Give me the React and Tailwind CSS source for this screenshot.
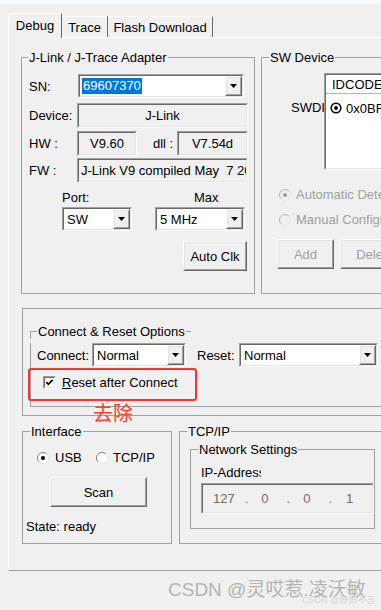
import React from 'react'

const F = "font-['Liberation_Sans',Arial,sans-serif]"
const CJK = "font-['Liberation_Sans','Noto_Sans_CJK_SC',sans-serif]"

// 3D borders, classic Windows style
function Sunken({ className = '', inner = '', children }) {
  return (
    <div className={`border border-t-[#a0a0a0] border-l-[#a0a0a0] border-b-white border-r-white ${className}`}>
      <div className={`h-full border border-t-[#696969] border-l-[#696969] border-b-[#e3e3e3] border-r-[#e3e3e3] ${inner}`}>
        {children}
      </div>
    </div>
  )
}

function Raised({ className = '', inner = '', children }) {
  return (
    <div className={`border border-t-white border-l-white border-b-[#696969] border-r-[#696969] ${className}`}>
      <div className={`h-full border border-t-[#e3e3e3] border-l-[#e3e3e3] border-b-[#a0a0a0] border-r-[#a0a0a0] ${inner}`}>
        {children}
      </div>
    </div>
  )
}

function Combo({ value, className = '', selected }) {
  return (
    <Sunken className={`h-[24px] shrink-0 ${className}`} inner="flex bg-white">
      <div className="flex min-w-0 flex-1 items-center pl-[2px]">
        <span className={selected ? 'bg-[#0078d7] px-[1px] leading-[16px] text-white' : 'pl-[1px]'}>{value}</span>
      </div>
      <Raised className="w-[17px] shrink-0" inner="flex items-center justify-center bg-[#f0f0f0]">
        <svg width="7" height="4" viewBox="0 0 7 4"><path d="M0 0h7L3.5 4z" fill="#000" /></svg>
      </Raised>
    </Sunken>
  )
}

function Field({ className = '', inner = '', children }) {
  return (
    <Sunken className={`h-[25px] shrink-0 ${className}`} inner={`flex items-center overflow-hidden whitespace-nowrap bg-[#f0f0f0] ${inner}`}>
      {children}
    </Sunken>
  )
}

function Radio({ checked, disabled }) {
  return (
    <svg width="12" height="12" viewBox="0 0 12 12" className="shrink-0">
      <circle cx="6" cy="6" r="5.5" fill={disabled ? '#f0f0f0' : '#fff'} />
      <path d="M2.1 9.9A5.5 5.5 0 0 1 9.9 2.1" fill="none" stroke={disabled ? '#b4b4b4' : '#808080'} />
      <path d="M9.9 2.1A5.5 5.5 0 0 1 2.1 9.9" fill="none" stroke="#e3e3e3" />
      {checked && <circle cx="6" cy="6" r="2" fill={disabled ? '#a0a0a0' : '#000'} />}
    </svg>
  )
}

function Group({ title, className = '', legend = 'ml-[6px]', children }) {
  return (
    <fieldset className={`shrink-0 border border-[#a0a0a0] ${className}`}>
      <legend className={`${legend} px-[1px] leading-[15px]`}>{title}</legend>
      {children}
    </fieldset>
  )
}

export default function App() {
  return (
    <div className={`relative h-[610px] w-[381px] overflow-hidden bg-[#f0f0f0] text-[13px] leading-[15px] text-black ${F}`}>
      <div className="h-[4px] bg-[#f6f9fb]" />

      {/* Tabs */}
      <div className="mt-[9px] flex h-[24px] items-end pl-[8px]">
        <div className="relative z-10 -mb-px flex h-[25px] w-[54px] items-center justify-center border-l border-r border-t border-l-white border-r-[#696969] border-t-white bg-[#f0f0f0] pb-[1px]">
          Debug
        </div>
        <div className="flex h-[21px] w-[46px] items-center justify-center border-r border-t border-r-[#696969] border-t-white">
          Trace
        </div>
        <div className="flex h-[21px] w-[105px] items-center justify-center border-r border-t border-r-[#696969] border-t-white">
          Flash Download
        </div>
      </div>

      {/* Tab page */}
      <div className="ml-[8px] h-[534px] border-b border-l border-t border-b-[#a0a0a0] border-l-white border-t-white">
        <div className="ml-[12px] mt-[12px] flex">
          {/* J-Link adapter */}
          <Group title="J-Link / J-Trace Adapter" className="h-[244px] w-[234px]">
            <div className="pl-[7px]">
              <div className="mt-[9px] flex h-[24px] items-center">
                <span className="w-[49px] shrink-0">SN:</span>
                <Combo value="69607370" selected className="w-[166px]" />
              </div>
              <div className="mt-[5px] flex h-[25px] items-center">
                <span className="w-[48px] shrink-0">Device:</span>
                <Field className="w-[171px]" inner="justify-center">J-Link</Field>
              </div>
              <div className="mt-[3px] flex h-[25px] items-center">
                <span className="w-[48px] shrink-0">HW :</span>
                <Field className="w-[60px]" inner="justify-center">V9.60</Field>
                <span className="ml-[16px] w-[24px] shrink-0">dll :</span>
                <Field className="w-[71px]" inner="justify-center">V7.54d</Field>
              </div>
              <div className="mt-[2px] flex h-[25px] items-center">
                <span className="w-[48px] shrink-0">FW :</span>
                <Field className="w-[171px]" inner="pl-[2px]">J-Link V9 compiled May&nbsp;&nbsp;7 2019</Field>
              </div>
              <div className="mt-[7px] flex h-[15px]">
                <span className="ml-[33px] w-[132px] shrink-0">Port:</span>
                <span>Max</span>
              </div>
              <div className="mt-[2px] flex">
                <Combo value="SW" className="ml-[33px] w-[70px]" />
                <Combo value="5 MHz" className="ml-[23px] w-[90px]" />
              </div>
              <Raised className="ml-[154px] mt-[10px] h-[30px] w-[64px]" inner="flex items-center justify-center bg-[#f0f0f0]">
                Auto Clk
              </Raised>
            </div>
          </Group>

          {/* SW device */}
          <Group title="SW Device" className="ml-[6px] h-[244px] w-[140px]" legend="ml-[7px]">
            <div className="mt-[8px] flex">
              <span className="ml-[29px] mt-[27px] w-[33px] shrink-0">SWDI</span>
              <Sunken className="h-[97px] w-[80px] shrink-0" inner="bg-white">
                <div className="flex h-[19px] items-center border-b border-[#b4b4b4] pl-[6px]">IDCODE</div>
                <div className="mt-[6px] flex h-[16px] items-center gap-[4px] pl-[4px]">
                  <svg width="12" height="12" viewBox="0 0 12 12" className="shrink-0">
                    <circle cx="6" cy="6" r="4.8" fill="#fff" stroke="#000" strokeWidth="1.6" />
                    <circle cx="6" cy="6" r="1.9" fill="#000" />
                  </svg>
                  <span className="whitespace-nowrap">0x0BF</span>
                </div>
              </Sunken>
            </div>
            <div className="ml-[17px] mt-[17px] flex h-[15px] items-center gap-[5px] whitespace-nowrap text-[#a0a0a0]">
              <Radio checked disabled />
              <span>Automatic Detection</span>
            </div>
            <div className="ml-[17px] mt-[10px] flex h-[15px] items-center gap-[5px] whitespace-nowrap text-[#a0a0a0]">
              <Radio disabled />
              <span>Manual Configuration</span>
            </div>
            <div className="ml-[15px] mt-[12px] flex gap-[6px] text-[#a0a0a0]">
              <Raised className="h-[30px] w-[57px] shrink-0" inner="flex items-center justify-center">Add</Raised>
              <Raised className="h-[30px] w-[70px] shrink-0" inner="flex items-center justify-center">Delete</Raised>
            </div>
          </Group>
        </div>

        {/* Connect & Reset */}
        <div className="ml-[13px] mt-[14px] h-[108px] w-[380px] border border-[#a0a0a0]">
          <div className="ml-[7px] mt-[15px]">
            <div className="flex h-[15px] w-[161px]">
              <div className="mt-[7px] h-[8px] w-[7px] border-l border-t border-[#a0a0a0]" />
              <span className="px-[1px] whitespace-nowrap">Connect &amp; Reset Options</span>
              <div className="mt-[7px] h-px flex-1 bg-[#a0a0a0]" />
            </div>
            <div className="h-[64px] w-[360px] border-b border-l border-[#a0a0a0] pl-[6px]">
              <div className="mt-[4px] flex h-[24px] items-center">
                <span className="w-[55px] shrink-0">Connect:</span>
                <Combo value="Normal" className="w-[94px]" />
                <span className="ml-[11px] w-[42px] shrink-0">Reset:</span>
                <Combo value="Normal" className="w-[139px]" />
              </div>
              <div className="ml-[6px] mt-[8px] flex h-[15px] items-center gap-[6px]">
                <Sunken className="h-[13px] w-[13px] shrink-0" inner="flex items-center justify-center bg-white">
                  <svg width="9" height="9" viewBox="0 0 9 9">
                    <path d="M1.3 4.2l2 2.1L7.6 1.8" fill="none" stroke="#000" strokeWidth="1.7" />
                  </svg>
                </Sunken>
                <span><span className="underline">R</span>eset after Connect</span>
              </div>
            </div>
          </div>
        </div>

        {/* Interface / TCP */}
        <div className="ml-[13px] mt-[8px] flex">
          <Group title="Interface" className="h-[120px] w-[150px]" legend="ml-[7px]">
            <div className="mt-[11px] flex h-[15px] items-center pl-[14px]">
              <Radio checked />
              <span className="ml-[6px] w-[41px] shrink-0">USB</span>
              <Radio />
              <span className="ml-[5px]">TCP/IP</span>
            </div>
            <Raised className="ml-[27px] mt-[12px] h-[30px] w-[97px]" inner="flex items-center justify-center bg-[#f0f0f0]">
              Scan
            </Raised>
            <div className="mt-[12px] h-[15px] pl-[3px]">State: ready</div>
          </Group>

          <Group title="TCP/IP" className="ml-[7px] h-[120px] w-[220px]" legend="ml-[7px]">
            <Group title="Network Settings" className="ml-[10px] mt-[3px] h-[87px] w-[185px]" legend="ml-[7px]">
              <div className="ml-[10px] mt-[8px] h-[15px] w-[60px] overflow-hidden whitespace-nowrap">IP-Address</div>
              <Sunken className="ml-[10px] mt-[3px] h-[31px] w-[173px]" inner="flex items-center bg-[#f0f0f0] pl-[10px] text-[#6d6d6d]">
                <span>127</span>
                <span className="ml-[10px]">.</span>
                <span className="ml-[13px]">0</span>
                <span className="ml-[18px]">.</span>
                <span className="ml-[13px]">0</span>
                <span className="ml-[18px]">.</span>
                <span className="ml-[14px]">1</span>
              </Sunken>
            </Group>
          </Group>
        </div>
      </div>

      {/* Annotation overlays */}
      <div className="absolute left-[28px] top-[368px] h-[33px] w-[169px] rounded-[3px] border-2 border-[#ff3030]" />
      <div className={`absolute left-[93px] top-[403px] text-[20px] leading-[22px] text-[#ff3b30] ${CJK}`}>去除</div>

      {/* Watermark */}
      <div className={`absolute left-[168px] top-[578px] whitespace-nowrap text-[19px] leading-[23px] text-[#b4b4b4] ${CJK}`}>
        CSDN @灵哎惹.凌沃敏
      </div>
      <div className={`absolute left-[302px] top-[595px] whitespace-nowrap text-[9px] leading-[11px] text-[#d6d6d6] ${CJK}`}>
        CSDN @静悄不言
      </div>
    </div>
  )
}
